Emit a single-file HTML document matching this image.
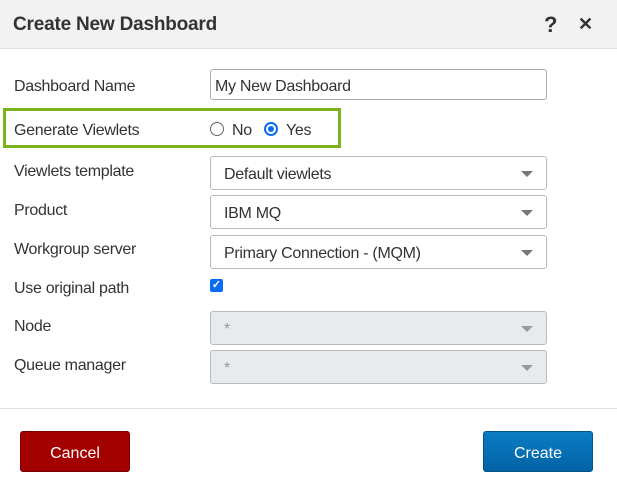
<!DOCTYPE html>
<html><head><style>
*{box-sizing:border-box;margin:0;padding:0}
body{width:617px;height:494px;background:#fff;font-family:"Liberation Sans",sans-serif;color:#333;position:relative;overflow:hidden}
.hdr{position:absolute;left:0;top:0;width:617px;height:49px;background:#f2f2f2;border-bottom:1px solid #ddd}
.title{position:absolute;left:13px;top:14px;font-size:19px;font-weight:bold;color:#333;letter-spacing:-0.2px}
.lbl{position:absolute;left:14px;font-size:16px;color:#333;line-height:20px;letter-spacing:-0.3px}
.inp{position:absolute;left:210px;width:337px;border:1px solid #bbb;border-radius:3px;font-size:16px;padding-left:13px;color:#333;background:#fff;letter-spacing:-0.3px}
.dis{background:#e8ebee;color:#999}
.arr{position:absolute;right:13px;top:50%;margin-top:-2px;border-left:6px solid transparent;border-right:6px solid transparent;border-top:6px solid #777}
.dis .arr{border-top-color:#999}
.btn{position:absolute;top:431px;height:41px;border-radius:3px;color:#fff;font-size:16px;text-align:center;line-height:43px}
</style></head><body>
<div class="hdr"><div class="title">Create New Dashboard</div>
<div style="position:absolute;left:544px;top:12px;font-size:22px;font-weight:bold;color:#333">?</div>
<div style="position:absolute;left:578px;top:14px;font-size:18px;font-weight:bold;color:#333">✕</div></div>

<div class="lbl" style="top:77px">Dashboard Name</div>
<div class="inp" style="top:69px;height:31px;line-height:33px;padding-left:4px;border-color:#aaa">My New Dashboard</div>

<div style="position:absolute;left:3px;top:108px;width:338px;height:40px;border:3px solid #7ab51d"></div>
<div class="lbl" style="top:121px">Generate Viewlets</div>
<div style="position:absolute;left:210px;top:122px;width:14px;height:14px;border:1px solid #666;border-radius:50%"></div>
<div class="lbl" style="left:232px;top:121px">No</div>
<div style="position:absolute;left:264px;top:122px;width:14px;height:14px;border:2px solid #0a6cf5;border-radius:50%;background:#fff"><div style="position:absolute;left:2px;top:2px;width:6px;height:6px;border-radius:50%;background:#0a6cf5"></div></div>
<div class="lbl" style="left:286px;top:121px">Yes</div>

<div class="lbl" style="top:162px">Viewlets template</div>
<div class="inp" style="top:156px;height:34px;line-height:36px">Default viewlets<div class="arr"></div></div>
<div class="lbl" style="top:201px">Product</div>
<div class="inp" style="top:195px;height:34px;line-height:36px">IBM MQ<div class="arr"></div></div>
<div class="lbl" style="top:240px">Workgroup server</div>
<div class="inp" style="top:235px;height:34px;line-height:36px">Primary Connection - (MQM)<div class="arr"></div></div>
<div class="lbl" style="top:279px">Use original path</div>
<div style="position:absolute;left:210px;top:279px;width:13px;height:13px;background:#0a6cf5;border-radius:2px;color:#fff;font-size:11px;line-height:13px;text-align:center;font-weight:bold">✓</div>
<div class="lbl" style="top:317px">Node</div>
<div class="inp dis" style="top:311px;height:34px;line-height:36px">*<div class="arr"></div></div>
<div class="lbl" style="top:356px">Queue manager</div>
<div class="inp dis" style="top:350px;height:34px;line-height:36px">*<div class="arr"></div></div>

<div style="position:absolute;left:0;top:408px;width:617px;height:1px;background:#ddd"></div>
<div class="btn" style="left:20px;width:110px;background:#a30000;border:1px solid #7a0000">Cancel</div>
<div class="btn" style="left:483px;width:110px;background:linear-gradient(#0a7cc4,#0463a5);border:1px solid #04548c">Create</div>
</body></html>
